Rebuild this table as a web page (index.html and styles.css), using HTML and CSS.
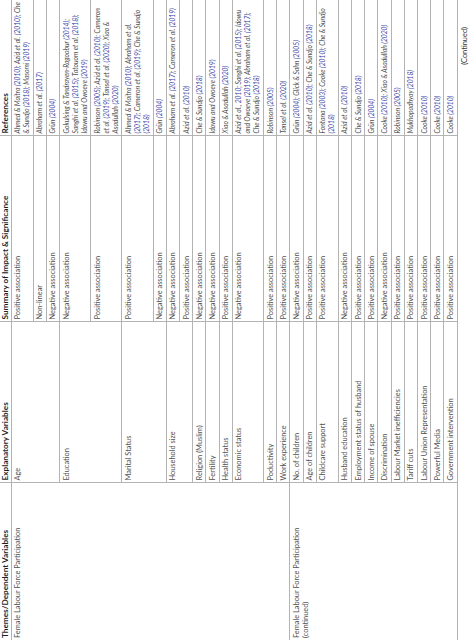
FILE: index.html
```html
<!DOCTYPE html>
<html lang="en">
<head>
<meta charset="utf-8">
<title>Female Labour Force Participation – determinants</title>
<link rel="stylesheet" href="styles.css">
</head>
<body>
<div class="page">
  <div class="sheet">
    <table class="tbl">
      <colgroup>
        <col class="c-theme">
        <col class="c-expl">
        <col class="c-sum">
        <col class="c-ref">
      </colgroup>
      <thead>
        <tr>
          <th class="theme">Themes/Dependent Variables</th>
          <th>Explanatory Variables</th>
          <th>Summary of Impact &amp; Significance</th>
          <th>References</th>
        </tr>
      </thead>
      <tbody>
        <tr>
          <td class="theme" rowspan="15">Female Labour Force Participation</td>
          <td rowspan="3">Age</td>
          <td>Positive association</td>
          <td class="ref">Ahmed &amp; Maitra <span class="yr">(2010)</span>; Azid et al. <span class="yr">(2010)</span>; Che<br>&amp; Sundjo <span class="yr">(2018)</span>; Masomi <span class="yr">(2019)</span></td>
        </tr>
        <tr>
          <td>Non-linear</td>
          <td class="ref">Abraham et al. <span class="yr">(2017)</span></td>
        </tr>
        <tr>
          <td>Negative association</td>
          <td class="ref">Grün <span class="yr">(2004)</span></td>
        </tr>
        <tr>
          <td rowspan="2">Education</td>
          <td>Negative association</td>
          <td class="ref">Gokulsing &amp; Tandrayen-Ragoobur <span class="yr">(2014)</span>;<br>Sanghi et al. <span class="yr">(2015)</span>; Tatouom et al. <span class="yr">(2018)</span>;<br>Idowu and Owoeye <span class="yr">(2019)</span></td>
        </tr>
        <tr>
          <td>Positive association</td>
          <td class="ref">Robinson <span class="yr">(2005)</span>; Azid et al. <span class="yr">(2010)</span>; Cameron<br>et al. <span class="yr">(2019)</span>; Tansel et al. <span class="yr">(2020)</span>; Xiao &amp;<br>Asadullah <span class="yr">(2020)</span></td>
        </tr>
        <tr>
          <td rowspan="2">Marital Status</td>
          <td>Positive association</td>
          <td class="ref">Ahmed &amp; Maitra <span class="yr">(2010)</span>; Abraham et al.<br><span class="yr">(2017)</span>; Cameron et al. <span class="yr">(2019)</span>; Che &amp; Sundjo<br><span class="yr">(2018)</span></td>
        </tr>
        <tr>
          <td>Negative association</td>
          <td class="ref">Grün <span class="yr">(2004)</span></td>
        </tr>
        <tr>
          <td rowspan="2">Household size</td>
          <td>Negative association</td>
          <td class="ref">Abraham et al. <span class="yr">(2017)</span>; Cameron et al. <span class="yr">(2019)</span></td>
        </tr>
        <tr>
          <td>Positive association</td>
          <td class="ref">Azid et al. <span class="yr">(2010)</span></td>
        </tr>
        <tr>
          <td>Religion (Muslim)</td>
          <td>Negative association</td>
          <td class="ref">Che &amp; Sundjo <span class="yr">(2018)</span></td>
        </tr>
        <tr>
          <td>Fertility</td>
          <td>Negative association</td>
          <td class="ref">Idowu and Owoeye <span class="yr">(2019)</span></td>
        </tr>
        <tr>
          <td>Health status</td>
          <td>Positive association</td>
          <td class="ref">Xiao &amp; Asadullah <span class="yr">(2020)</span></td>
        </tr>
        <tr>
          <td>Economic status</td>
          <td>Negative association</td>
          <td class="ref">Azid et al., <span class="yr">2010</span>; Sanghi et al. <span class="yr">(2015)</span>; Idowu<br>and Owoeye <span class="yr">(2019)</span>; Abraham et al. <span class="yr">(2017)</span>;<br>Che &amp; Sundjo <span class="yr">(2018)</span></td>
        </tr>
        <tr>
          <td>Poductivity</td>
          <td>Positive association</td>
          <td class="ref">Robinson <span class="yr">(2005)</span></td>
        </tr>
        <tr>
          <td>Work experience</td>
          <td>Positive association</td>
          <td class="ref">Tansel et al. <span class="yr">(2020)</span></td>
        </tr>
        <tr>
          <td class="theme" rowspan="12">Female Labour Force Participation<br>(continued)</td>
          <td>No. of children</td>
          <td>Negative association</td>
          <td class="ref">Grün <span class="yr">(2004)</span>; Glick &amp; Sahn <span class="yr">(2005)</span></td>
        </tr>
        <tr>
          <td>Age of children</td>
          <td>Positive association</td>
          <td class="ref">Azid et al. <span class="yr">(2010)</span>; Che &amp; Sundjo <span class="yr">(2018)</span></td>
        </tr>
        <tr>
          <td>Childcare support</td>
          <td>Positive association</td>
          <td class="ref">Fontana <span class="yr">(2003)</span>; Cooke <span class="yr">(2010)</span>; Che &amp; Sundjo<br><span class="yr">(2018)</span></td>
        </tr>
        <tr>
          <td>Husband education</td>
          <td>Negative association</td>
          <td class="ref">Azid et al. <span class="yr">(2010)</span></td>
        </tr>
        <tr>
          <td>Employment status of husband</td>
          <td>Positive association</td>
          <td class="ref">Che &amp; Sundjo <span class="yr">(2018)</span></td>
        </tr>
        <tr>
          <td>Income of spouse</td>
          <td>Positive association</td>
          <td class="ref">Grün <span class="yr">(2004)</span></td>
        </tr>
        <tr>
          <td>Discrimination</td>
          <td>Negative association</td>
          <td class="ref">Cooke <span class="yr">(2010)</span>; Xiao &amp; Asadullah <span class="yr">(2020)</span></td>
        </tr>
        <tr>
          <td>Labour Market inefficiencies</td>
          <td>Positive association</td>
          <td class="ref">Robinson <span class="yr">(2005)</span></td>
        </tr>
        <tr>
          <td>Tariff cuts</td>
          <td>Positive association</td>
          <td class="ref">Mukhopadhyay <span class="yr">(2018)</span></td>
        </tr>
        <tr>
          <td>Labour Union Representation</td>
          <td>Positive association</td>
          <td class="ref">Cooke <span class="yr">(2010)</span></td>
        </tr>
        <tr>
          <td>Powerful Media</td>
          <td>Positive association</td>
          <td class="ref">Cooke <span class="yr">(2010)</span></td>
        </tr>
        <tr>
          <td>Government intervention</td>
          <td>Positive association</td>
          <td class="ref">Cooke <span class="yr">(2010)</span></td>
        </tr>
      </tbody>
    </table>
    <p class="cont">(Continued)</p>
  </div>
</div>
</body>
</html>
```

FILE: styles.css
```css
html, body {
  margin: 0;
  padding: 0;
  background: #ffffff;
}

.page {
  width: 474px;
  height: 640px;
  overflow: hidden;
  position: relative;
}

/* The printed table is turned a quarter turn counter-clockwise */
.sheet {
  display: flow-root;
  width: 640px;
  height: 474px;
  transform-origin: 0 0;
  transform: translateY(640px) rotate(-90deg);
  font-family: Lato, "Open Sans", "Liberation Sans", sans-serif;
  color: #4a4a4a;
}

.tbl {
  margin-top: -3px;
  width: 641px;
  table-layout: fixed;
  border-collapse: collapse;
}

.c-theme { width: 157px; }
.c-expl { width: 161px; }
.c-sum { width: 186px; }
.c-ref { width: 137px; }

.tbl th,
.tbl td {
  border: 1px solid #b3b3b3;
  padding: 1.6px 2px;
  line-height: 9px;
  text-align: left;
  vertical-align: top;
  white-space: nowrap;
  overflow: hidden;
}

.tbl th {
  font-size: 8.2px;
  font-weight: 700;
  color: #1e1e1e;
  padding-top: 2.5px;
  padding-bottom: 1px;
}

.tbl td {
  font-size: 7.4px;
  font-weight: 400;
  color: #505050;
}

.tbl .theme {
  border-left: none;
}

.tbl td.ref {
  font-style: italic;
  font-size: 6.8px;
  letter-spacing: -0.05px;
  color: #4d4d4d;
}

.yr {
  color: #3d48a8;
}

.cont {
  margin: 2px 0 0;
  padding-right: 27px;
  text-align: right;
  font-size: 7.4px;
  line-height: 9px;
  color: #333;
}
```
